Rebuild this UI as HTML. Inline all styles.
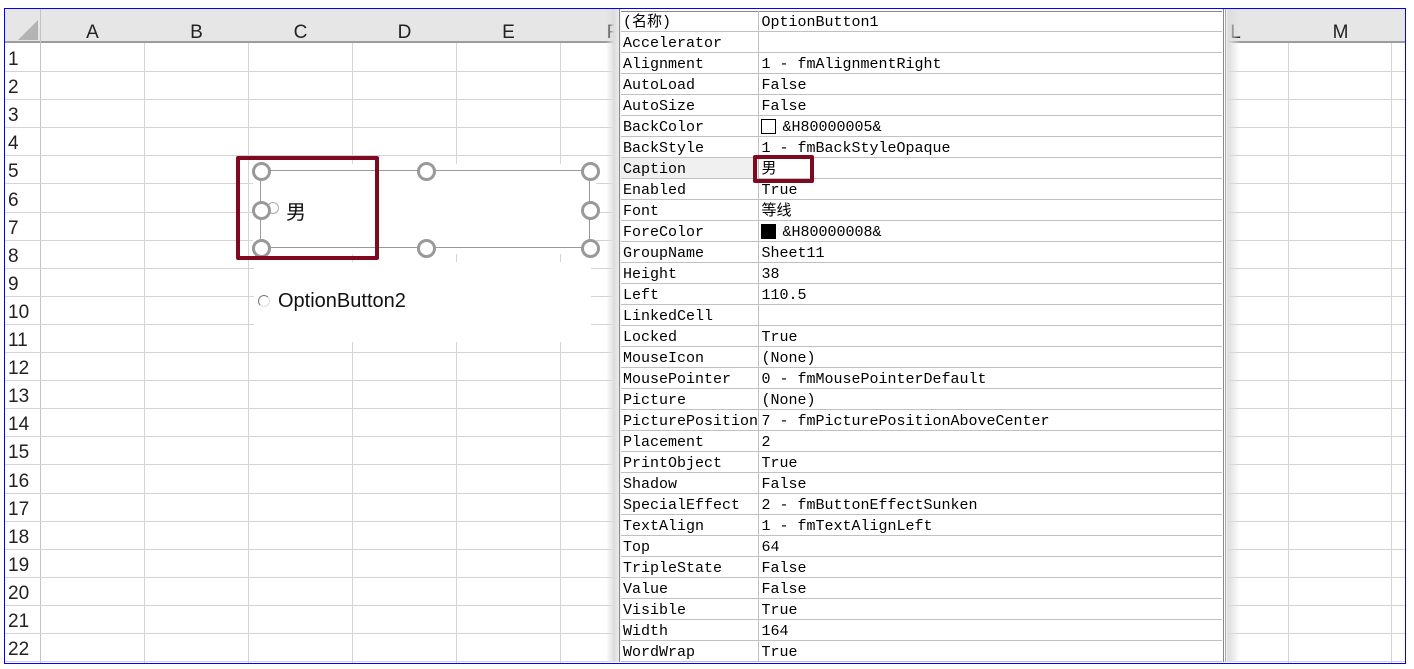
<!DOCTYPE html><html><head><meta charset="utf-8"><style>
body{margin:0;width:1414px;height:669px;background:#fff;position:relative;overflow:hidden;font-family:"Liberation Sans","Noto Sans CJK SC",sans-serif}
.a{position:absolute}
.vl{position:absolute;width:1px;background:#d4d4d4;top:43px;height:620px}
.hl{position:absolute;height:1px;background:#d4d4d4;left:41px;width:1400px}
.ch{position:absolute;top:9px;height:34px;line-height:48px;text-align:center;font-size:19px;color:#222;width:103px}
.rn{position:absolute;left:8px;font-size:19px;color:#222;width:32px}
table{border-collapse:collapse;font-family:"Liberation Mono","Noto Sans CJK SC",monospace;font-size:15px}
td{border-bottom:1px solid #c0c0c0;height:16px;padding:4px 0 0 2px;line-height:16px;white-space:nowrap;overflow:hidden}
td.n{width:135px;border-right:1px solid #c0c0c0}
td.v{width:459px}
.sw{display:inline-block;width:13px;height:13px;border:1px solid #000;vertical-align:top;position:relative;top:-1px;margin-right:6px}
.h{display:inline-block;width:13px;height:13px;border-radius:50%;border:3px solid #999;background:#fff;position:absolute}
</style></head><body>
<div class="a" style="left:4px;top:8px;width:1400px;height:654px;border:1px solid #0000ff"></div>
<div class="a" style="left:5px;top:9px;width:1400px;height:34px;background:#e6e6e6;border-bottom:2px solid #9c9c9c;box-sizing:border-box"></div>
<div class="a" style="left:18px;top:20px;width:0;height:0;border-left:20px solid transparent;border-bottom:20px solid #b4b4b4"></div>
<div class="vl" style="left:40px;top:9px;height:654px;background:#c4c4c4"></div>
<div class="ch" style="left:41px">A</div><div class="ch" style="left:145px">B</div><div class="ch" style="left:249px">C</div><div class="ch" style="left:353px">D</div><div class="ch" style="left:457px">E</div><div class="ch" style="left:561px">F</div>
<div class="ch" style="left:1184px">L</div><div class="ch" style="left:1289px">M</div>
<div class="vl" style="left:144px"></div><div class="vl" style="left:248px"></div><div class="vl" style="left:352px"></div><div class="vl" style="left:456px"></div><div class="vl" style="left:560px"></div><div class="vl" style="left:1288px"></div><div class="vl" style="left:1391px"></div>
<div id="rows"></div>
<script>
var s='';for(var i=1;i<=22;i++){var y=43+(i-1)*28.1;s+='<div class="rn" style="top:'+(y+6)+'px">'+i+'</div><div class="hl" style="top:'+Math.round(y+28)+'px;left:5px"></div>';}
document.getElementById('rows').innerHTML=s;
</script>
<div class="a" style="left:254px;top:262px;width:337px;height:80px;background:#fff"></div>
<div class="a" style="left:258px;top:295px;width:10px;height:10px;border:1px solid #777;border-radius:50%;border-right-color:#ddd;border-bottom-color:#ddd"></div>
<div class="a" style="left:278px;top:290px;font-size:20px;color:#111">OptionButton2</div>
<div class="a" style="left:253px;top:164px;width:343px;height:90px;background:#fff"></div>
<div class="a" style="left:260px;top:170px;width:328px;height:76px;border:1px solid #999"></div>
<div class="a" style="left:267px;top:202px;width:10px;height:10px;border:1px solid #aaa;border-radius:50%"></div>
<div class="a" style="left:286px;top:196px;font-size:20px;color:#111">男</div>
<span class="h" style="left:252px;top:162px"></span><span class="h" style="left:417px;top:162px"></span><span class="h" style="left:581px;top:162px"></span>
<span class="h" style="left:252px;top:201px"></span><span class="h" style="left:581px;top:201px"></span>
<span class="h" style="left:252px;top:239px"></span><span class="h" style="left:417px;top:239px"></span><span class="h" style="left:581px;top:239px"></span>
<div class="a" style="left:236px;top:156px;width:135px;height:96px;border:4px solid #7f0a20;border-radius:2px"></div>
<div class="a" style="left:606px;top:9px;width:634px;height:653px;background:linear-gradient(90deg,rgba(0,0,0,0) 0,#ddd 8px,#eee 14px,#fff 15px,#fff 619px,#ddd 622px,rgba(255,255,255,0) 634px)"></div>
<div class="a" style="left:619px;top:9px;width:1px;height:653px;background:#888"></div>
<div class="a" style="left:1223px;top:9px;width:1px;height:653px;background:#888"></div>
<div class="a" style="left:1225px;top:9px;width:1px;height:653px;background:#aaa"></div>
<div class="a" style="left:621px;top:11px;width:601px;height:1px;background:#888"></div>
<table class="a" style="left:621px;top:11px;width:601px">
<tr><td class="n">(名称)</td><td class="v">OptionButton1</td></tr>
<tr><td class="n">Accelerator</td><td class="v"></td></tr>
<tr><td class="n">Alignment</td><td class="v">1 - fmAlignmentRight</td></tr>
<tr><td class="n">AutoLoad</td><td class="v">False</td></tr>
<tr><td class="n">AutoSize</td><td class="v">False</td></tr>
<tr><td class="n">BackColor</td><td class="v"><span class="sw" style="background:#fff"></span>&amp;H80000005&amp;</td></tr>
<tr><td class="n">BackStyle</td><td class="v">1 - fmBackStyleOpaque</td></tr>
<tr><td class="n" style="background:#f0f0f0">Caption</td><td class="v">男</td></tr>
<tr><td class="n">Enabled</td><td class="v">True</td></tr>
<tr><td class="n">Font</td><td class="v">等线</td></tr>
<tr><td class="n">ForeColor</td><td class="v"><span class="sw" style="background:#000"></span>&amp;H80000008&amp;</td></tr>
<tr><td class="n">GroupName</td><td class="v">Sheet11</td></tr>
<tr><td class="n">Height</td><td class="v">38</td></tr>
<tr><td class="n">Left</td><td class="v">110.5</td></tr>
<tr><td class="n">LinkedCell</td><td class="v"></td></tr>
<tr><td class="n">Locked</td><td class="v">True</td></tr>
<tr><td class="n">MouseIcon</td><td class="v">(None)</td></tr>
<tr><td class="n">MousePointer</td><td class="v">0 - fmMousePointerDefault</td></tr>
<tr><td class="n">Picture</td><td class="v">(None)</td></tr>
<tr><td class="n">PicturePosition</td><td class="v">7 - fmPicturePositionAboveCenter</td></tr>
<tr><td class="n">Placement</td><td class="v">2</td></tr>
<tr><td class="n">PrintObject</td><td class="v">True</td></tr>
<tr><td class="n">Shadow</td><td class="v">False</td></tr>
<tr><td class="n">SpecialEffect</td><td class="v">2 - fmButtonEffectSunken</td></tr>
<tr><td class="n">TextAlign</td><td class="v">1 - fmTextAlignLeft</td></tr>
<tr><td class="n">Top</td><td class="v">64</td></tr>
<tr><td class="n">TripleState</td><td class="v">False</td></tr>
<tr><td class="n">Value</td><td class="v">False</td></tr>
<tr><td class="n">Visible</td><td class="v">True</td></tr>
<tr><td class="n">Width</td><td class="v">164</td></tr>
<tr><td class="n">WordWrap</td><td class="v">True</td></tr>
</table>
<div class="a" style="left:753px;top:155px;width:53px;height:20px;border:4px solid #7f0a20;border-radius:2px"></div>
</body></html>
